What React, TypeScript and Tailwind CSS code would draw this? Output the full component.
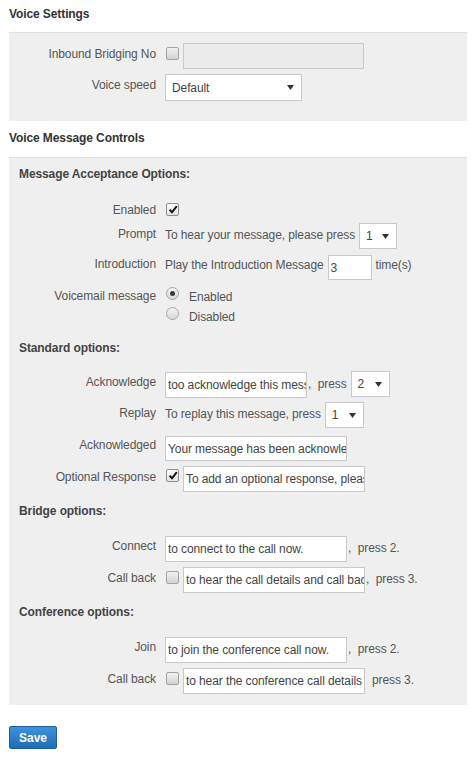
import React from "react";

function Check({ checked = false, className = "" }: { checked?: boolean; className?: string }) {
  return (
    <span
      className={`flex h-[13px] w-[13px] shrink-0 items-center justify-center rounded-[2px] border ${
        checked
          ? "border-[#8e8e8e] bg-linear-to-b from-[#fbfbfb] to-[#e4e4e4]"
          : "border-[#a2a2a2] bg-linear-to-b from-[#f1f1f1] to-[#d3d3d3]"
      } ${className}`}
    >
      {checked && (
        <svg width="10" height="9" viewBox="0 0 10 9">
          <path d="M1.6 4.6 L4 7.3 L8.8 1.2" fill="none" stroke="#111" strokeWidth="2" />
        </svg>
      )}
    </span>
  );
}

function Radio({ checked = false }: { checked?: boolean }) {
  return (
    <span className="ml-[1px] flex h-[13px] w-[13px] shrink-0 items-center justify-center rounded-full border border-[#a6a6a6] bg-linear-to-b from-[#f5f5f5] to-[#d8d8d8]">
      {checked && <span className="h-[5px] w-[5px] rounded-full bg-[#3a3a3a]" />}
    </span>
  );
}

function Sel({ value, className = "" }: { value: string; className?: string }) {
  return (
    <div
      className={`flex shrink-0 items-center justify-between border border-[#c8c8c8] bg-white pl-[6px] pr-[7px] text-[#444] ${className}`}
    >
      <span>{value}</span>
      <svg width="7" height="5" viewBox="0 0 7 5">
        <polygon points="0,0 7,0 3.5,5" fill="#333" />
      </svg>
    </div>
  );
}

function Field({ value, className = "" }: { value: string; className?: string }) {
  return (
    <input
      readOnly
      defaultValue={value}
      className={`shrink-0 border border-[#c8c8c8] pl-[2px] text-[12px] tracking-[-0.1px] text-[#444] outline-none ${className}`}
    />
  );
}

function Row({
  label,
  labelClass = "pt-[4px]",
  className = "",
  children,
}: {
  label: string;
  labelClass?: string;
  className?: string;
  children?: React.ReactNode;
}) {
  return (
    <div className={`flex items-start ${className}`}>
      <div className={`w-[147px] shrink-0 whitespace-nowrap text-right ${labelClass}`}>{label}</div>
      <div className="ml-[9px] flex items-start whitespace-nowrap">{children}</div>
    </div>
  );
}

export default function App() {
  return (
    <div className="h-[757px] w-[474px] overflow-hidden bg-white font-['Liberation_Sans',Arial,sans-serif] text-[12px] leading-[14px] tracking-[-0.1px] text-[#555]">
      <div className="h-[32px] pl-[9px] pt-[7px] font-bold text-[#333]">Voice Settings</div>

      <div className="ml-[9px] w-[458px] border-t border-[#e0e0e0] bg-[#efefef] pb-[20px] pt-[10px]">
        <Row label="Inbound Bridging No" labelClass="pt-[4px]">
          <Check className="ml-[1px] mt-[4px]" />
          <Field value="" className="ml-[4px] h-[26px] w-[181px] bg-[#ececec]" />
        </Row>
        <Row label="Voice speed" labelClass="pt-[4px]" className="mt-[5px]">
          <Sel value="Default" className="h-[27px] w-[137px]" />
        </Row>
      </div>

      <div className="h-[36px] pl-[9px] pt-[10px] font-bold text-[#333]">Voice Message Controls</div>

      <div className="ml-[9px] w-[458px] border-t border-[#e0e0e0] bg-[#efefef] pb-[11px] pt-[9px]">
        <div className="pl-[10px] font-bold text-[#444]">Message Acceptance Options:</div>

        <Row label="Enabled" className="mt-[18px]">
          <Check checked className="ml-[1px] mt-[4px]" />
        </Row>

        <Row label="Prompt" className="mt-[6px]">
          <span className="pt-[5px]">To hear your message, please press</span>
          <Sel value="1" className="ml-[4px] h-[26px] w-[38px]" />
        </Row>

        <Row label="Introduction" labelClass="pt-[2px]" className="mt-[6px]">
          <span className="pt-[3px]">Play the Introduction Message</span>
          <Field value="3" className="ml-[4px] h-[25px] w-[44px] bg-white" />
          <span className="ml-[4px] pt-[3px]">time(s)</span>
        </Row>

        <Row label="Voicemail message" labelClass="pt-[2px]" className="mt-[7px]">
          <div className="flex flex-col">
            <div className="flex h-[20px] items-start">
              <Radio checked />
              <span className="ml-[10px] mt-[3px]">Enabled</span>
            </div>
            <div className="flex items-start">
              <Radio />
              <span className="ml-[10px] mt-[3px]">Disabled</span>
            </div>
          </div>
        </Row>

        <div className="mt-[17px] pl-[10px] font-bold text-[#444]">Standard options:</div>

        <Row label="Acknowledge" labelClass="pt-[3px]" className="mt-[17px]">
          <Field value="too acknowledge this message:" className="h-[26px] w-[142px] bg-white" />
          <span className="ml-[1px] pt-[5px]">,&nbsp; press</span>
          <Sel value="2" className="-mt-px ml-[4px] h-[26px] w-[39px]" />
        </Row>

        <Row label="Replay" className="mt-[4px]">
          <span className="pt-[5px]">To replay this message, press</span>
          <Sel value="1" className="ml-[4px] h-[26px] w-[39px]" />
        </Row>

        <Row label="Acknowledged" labelClass="pt-[2px]" className="mt-[8px]">
          <Field value="Your message has been acknowledged." className="h-[25px] w-[182px] bg-white" />
        </Row>

        <Row label="Optional Response" className="mt-[5px]">
          <Check checked className="ml-[1px] mt-[3px]" />
          <Field
            value="To add an optional response, please press 4."
            className="ml-[4px] h-[26px] w-[182px] bg-white"
          />
        </Row>

        <div className="mt-[12px] pl-[10px] font-bold text-[#444]">Bridge options:</div>

        <Row label="Connect" labelClass="pt-[3px]" className="mt-[18px]">
          <Field value="to connect to the call now." className="h-[26px] w-[182px] bg-white" />
          <span className="ml-[1px] pt-[5px]">,&nbsp; press 2.</span>
        </Row>

        <Row label="Call back" className="mt-[5px]">
          <Check className="ml-[1px] mt-[4px]" />
          <Field
            value="to hear the call details and call back later"
            className="ml-[4px] h-[26px] w-[182px] bg-white"
          />
          <span className="ml-[1px] pt-[5px]">,&nbsp; press 3.</span>
        </Row>

        <div className="mt-[12px] pl-[10px] font-bold text-[#444]">Conference options:</div>

        <Row label="Join" labelClass="pt-[3px]" className="mt-[18px]">
          <Field value="to join the conference call now." className="h-[26px] w-[182px] bg-white" />
          <span className="ml-[1px] pt-[5px]">,&nbsp; press 2.</span>
        </Row>

        <Row label="Call back" className="mt-[5px]">
          <Check className="ml-[1px] mt-[4px]" />
          <Field
            value="to hear the conference call details"
            className="ml-[4px] h-[26px] w-[182px] bg-white"
          />
          <span className="ml-[7px] pt-[5px]">press 3.</span>
        </Row>
      </div>

      <button className="ml-[9px] mt-[21px] flex h-[23px] w-[48px] items-center justify-center rounded-[2px] border border-[#1d5f9c] bg-linear-to-b from-[#3d93dc] to-[#1e6cb4] font-bold tracking-normal text-white">
        Save
      </button>
    </div>
  );
}
